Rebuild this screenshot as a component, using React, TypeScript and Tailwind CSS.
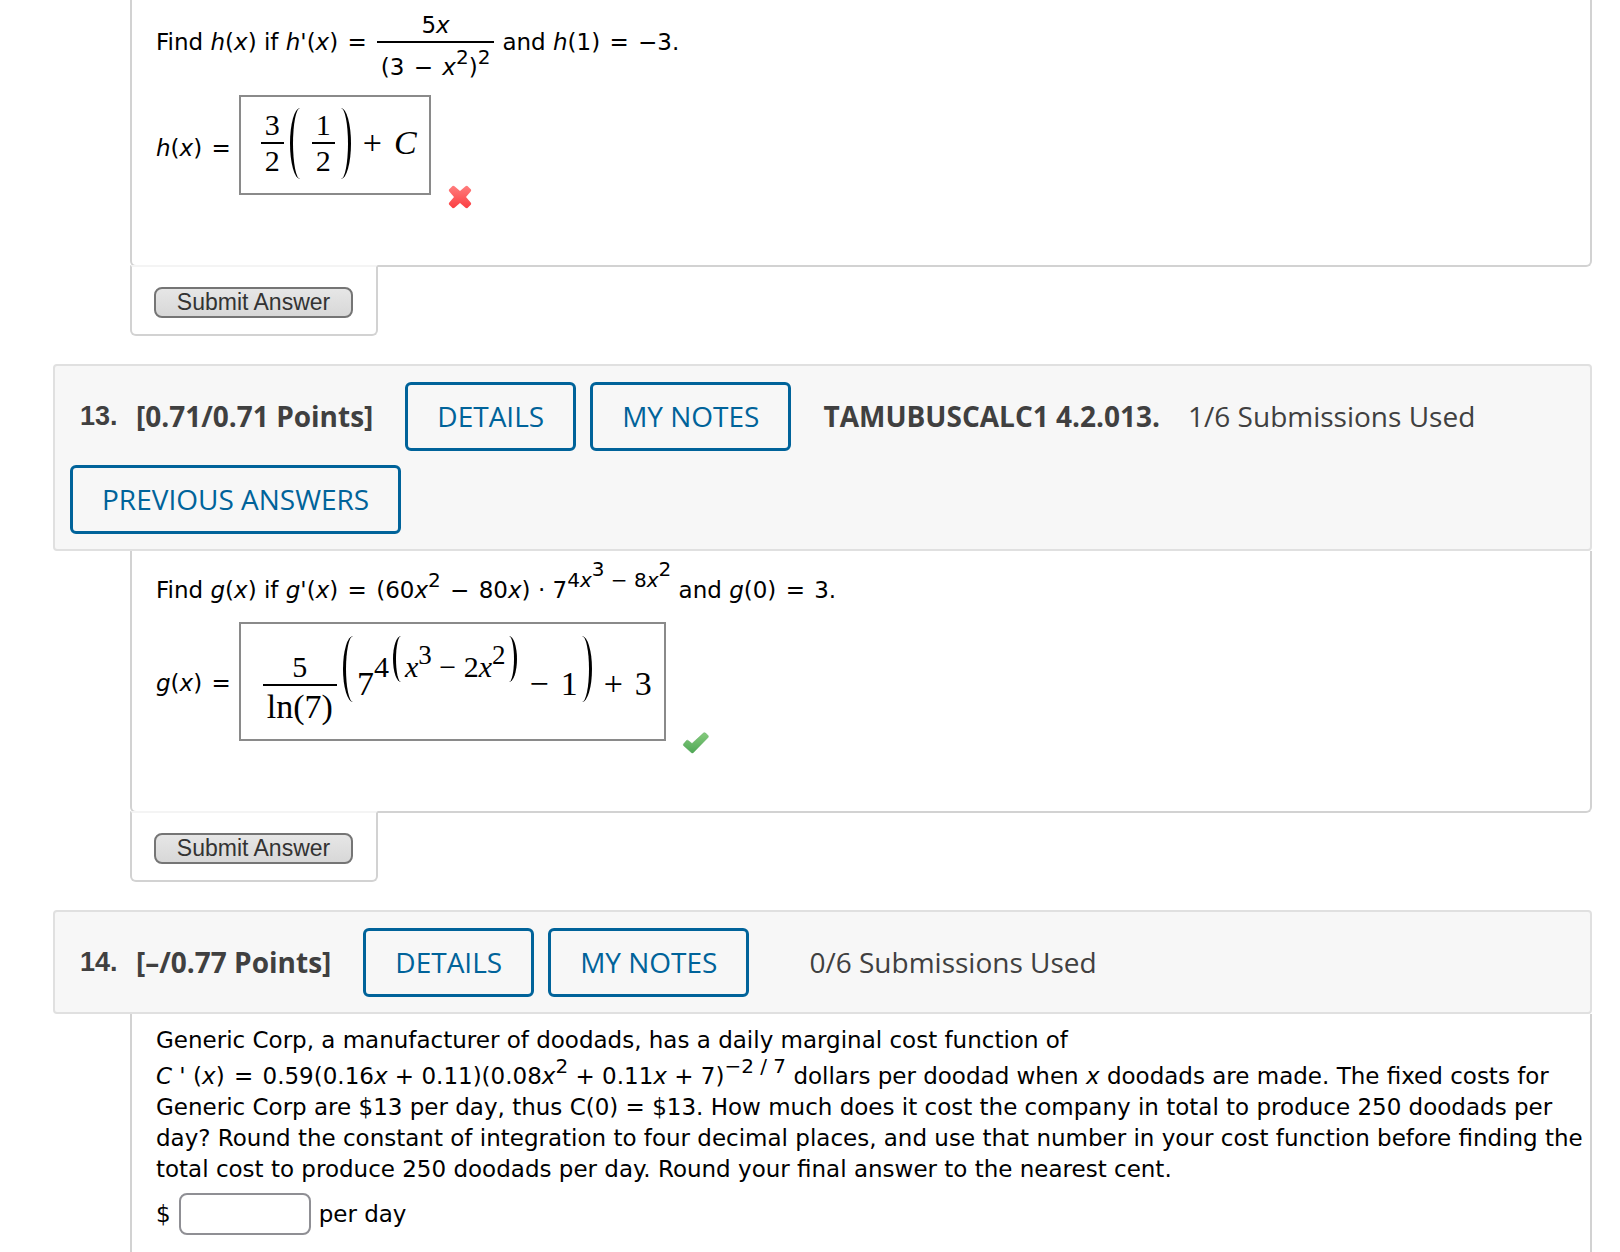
import type { ReactNode } from "react";

type ProblemHeaderProps = {
  number: string;
  points: string;
  source?: string;
  submissions: string;
  hasPrevious?: boolean;
};

function HeaderButton({ children }: { children: ReactNode }) {
  return (
    <button
      type="button"
      className="h-[69px] rounded-md border-3 border-[#00639a] px-[29px] pb-[2px] text-[28px] font-medium text-[#00639a]"
    >
      {children}
    </button>
  );
}

function ProblemHeader({ number, points, source, submissions, hasPrevious }: ProblemHeaderProps) {
  return (
    <header className="rounded-sm border-2 border-[#e0e0e0] bg-[#f7f7f7] px-[15px] pt-4 pb-[15px] font-['Open_Sans',sans-serif] text-[28px] text-[#404040]">
      <div className="flex items-center">
        <span className="ml-[10px] w-14 font-['Liberation_Sans',sans-serif] text-[27px] font-bold">{number}</span>
        <h2 className="pb-[2px] font-bold">{points}</h2>
        <div className="ml-8 flex gap-[14px]">
          <HeaderButton>DETAILS</HeaderButton>
          <HeaderButton>MY NOTES</HeaderButton>
        </div>
        {source && <strong className="ml-8 pb-[2px] font-bold">{source}</strong>}
        <span className={source ? "ml-7 pb-[2px]" : "ml-[60px] pb-[2px]"}>{submissions}</span>
      </div>
      {hasPrevious && (
        <div className="mt-[14px]">
          <HeaderButton>PREVIOUS ANSWERS</HeaderButton>
        </div>
      )}
    </header>
  );
}

function ProblemBody({ children }: { children: ReactNode }) {
  return (
    <div className="ml-[77px] rounded-b-md border-x-2 border-b-2 border-[#d2d2d2] pl-6 text-[23px] leading-[31px] text-black">
      {children}
    </div>
  );
}

function SubmitTab() {
  return (
    <div className="-mt-[2px] mb-7 ml-[77px] h-[71px] w-[248px] rounded-b-md border-2 border-t-[#f4f4f4] border-[#d2d2d2] bg-white px-[22px] pt-5">
      <button
        type="submit"
        className="h-[31px] w-[199px] rounded-lg border-2 border-[#757575] bg-linear-to-b from-[#e6e6e6] to-[#d8d8d8] font-['Liberation_Sans',sans-serif] text-[23px] leading-[27px] text-[#333333]"
      >
        Submit Answer
      </button>
    </div>
  );
}

function Sup({ children }: { children: ReactNode }) {
  return <sup className="static align-[11px] text-[20px] leading-none">{children}</sup>;
}

function Op({ children }: { children: ReactNode }) {
  return <span className="mx-[2px]">{children}</span>;
}

function Fraction({ top, bottom, large }: { top: string; bottom: string; large?: boolean }) {
  return (
    <span className="flex flex-col items-center text-[30px] leading-[34px]">
      <span>{top}</span>
      <span
        className={`self-stretch border-t-2 border-black px-1 text-center ${large ? "text-[34px] leading-[42px]" : ""}`}
      >
        {bottom}
      </span>
    </span>
  );
}

// one-sided border with a full radius tapers at both ends like a tall delimiter
function OpenParen({ className }: { className: string }) {
  return <span aria-label="(" className={`rounded-l-[100%_50%] border-l-3 border-black ${className}`} />;
}

function CloseParen({ className }: { className: string }) {
  return <span aria-label=")" className={`rounded-r-[100%_50%] border-r-3 border-black ${className}`} />;
}

function WrongIcon() {
  return (
    <svg width="26" height="26" viewBox="0 0 26 26" role="img" aria-label="Incorrect">
      <defs>
        <linearGradient id="wrong" x1="0" y1="0" x2="0" y2="1">
          <stop offset="0" stopColor="#ff7d7d" />
          <stop offset="1" stopColor="#fb3f42" />
        </linearGradient>
      </defs>
      <path
        d="M2 5.5 L5.5 2 Q6.5 1.5 7.5 2.3 L13 7 L18.5 2.3 Q19.5 1.5 20.5 2 L24 5.5 Q24.5 6.5 23.7 7.5 L19 13 L23.7 18.5 Q24.5 19.5 24 20.5 L20.5 24 Q19.5 24.5 18.5 23.7 L13 19 L7.5 23.7 Q6.5 24.5 5.5 24 L2 20.5 Q1.5 19.5 2.3 18.5 L7 13 L2.3 7.5 Q1.5 6.5 2 5.5 Z"
        fill="url(#wrong)"
      />
    </svg>
  );
}

function RightIcon() {
  return (
    <svg width="28" height="24" viewBox="0 0 28 24" role="img" aria-label="Correct">
      <defs>
        <linearGradient id="right" x1="0" y1="0" x2="0" y2="1">
          <stop offset="0" stopColor="#86cb7d" />
          <stop offset="1" stopColor="#4fa856" />
        </linearGradient>
      </defs>
      <path
        d="M1.5 13 L4.5 9.5 Q5.5 8.8 6.5 9.7 L10 12.5 L21.5 2 Q22.5 1.3 23.5 2 L26 4.5 Q26.8 5.5 26 6.5 L11.5 21.5 Q10.3 22.5 9.2 21.5 L1.7 14.8 Q1 14 1.5 13 Z"
        fill="url(#right)"
        stroke="#4c9d50"
        strokeOpacity="0.4"
      />
    </svg>
  );
}

function MathBox({ className, children }: { className: string; children: ReactNode }) {
  return (
    <div
      role="math"
      className={`flex border-2 border-[#8a8a8a] font-['Liberation_Serif',serif] text-[34px] leading-[38px] ${className}`}
    >
      {children}
    </div>
  );
}

export default function App() {
  return (
    <main className="min-h-screen overflow-x-hidden bg-white pr-7 pl-[53px] font-['DejaVu_Sans',Verdana,sans-serif]">
      <section>
        <ProblemBody>
          <div className="flex items-center pt-[10px]">
            <span className="pb-2">
              Find <i>h</i>(<i>x</i>) if <i>h'</i>(<i>x</i>) <Op>=</Op>
            </span>
            <span className="mx-2 flex flex-col text-center">
              <span>
                5<i>x</i>
              </span>
              <span className="border-t-2 border-black px-1 pt-1">
                (3 <Op>−</Op> <i>x</i>
                <Sup>2</Sup>)<Sup>2</Sup>
              </span>
            </span>
            <span className="pb-2">
              and <i>h</i>(1) <Op>=</Op> −3.
            </span>
          </div>
          <div className="flex items-start pt-3 pb-[55px]">
            <span className="mr-[6px] pt-[38px]">
              <i>h</i>(<i>x</i>) <Op>=</Op>
            </span>
            <MathBox className="h-[100px] items-center pr-3 pb-1 pl-5">
              <Fraction top="3" bottom="2" />
              <OpenParen className="ml-[6px] h-[71px] w-[10px]" />
              <span className="mr-[6px] ml-3">
                <Fraction top="1" bottom="2" />
              </span>
              <CloseParen className="mr-3 h-[71px] w-[10px]" />
              <span>+</span>
              <i className="ml-3">C</i>
            </MathBox>
            <span className="mt-[89px] ml-4">
              <WrongIcon />
            </span>
          </div>
        </ProblemBody>
        <SubmitTab />
      </section>

      <section>
        <ProblemHeader
          number="13."
          points="[0.71/0.71 Points]"
          source="TAMUBUSCALC1 4.2.013."
          submissions="1/6 Submissions Used"
          hasPrevious
        />
        <ProblemBody>
          <p className="pt-2">
            Find <i>g</i>(<i>x</i>) if <i>g'</i>(<i>x</i>) <Op>=</Op> (60<i>x</i>
            <Sup>2</Sup> <Op>−</Op> 80<i>x</i>) · 7
            <Sup>
              4<i>x</i>
              <Sup>3</Sup> − 8<i>x</i>
              <Sup>2</Sup>
            </Sup>{" "}
            and <i>g</i>(0) <Op>=</Op> 3.
          </p>
          <div className="flex items-start pt-4 pb-14">
            <span className="mr-[6px] pt-[46px]">
              <i>g</i>(<i>x</i>) <Op>=</Op>
            </span>
            <MathBox className="h-[119px] items-start pt-3 pr-3 pl-[22px]">
              <span className="mt-[14px]">
                <Fraction top="5" bottom="ln(7)" large />
              </span>
              <OpenParen className="ml-[6px] h-[66px] w-[10px]" />
              <span className="mt-[29px] ml-1">7</span>
              <span className="flex items-start text-[30px]">
                <span className="mt-3">4</span>
                <OpenParen className="ml-1 h-[46px] w-2" />
                <span className="mt-3 mr-1 ml-1">
                  <i>x</i>
                  <sup className="static align-[13px] text-[27px] leading-0">3</sup> − 2<i>x</i>
                  <sup className="static align-[13px] text-[27px] leading-0">2</sup>
                </span>
                <CloseParen className="h-[46px] w-2" />
              </span>
              <span className="mt-[29px] ml-3 flex gap-3">
                <span>−</span>
                <span>1</span>
              </span>
              <CloseParen className="ml-1 h-[66px] w-[10px]" />
              <span className="mt-[29px] ml-3 flex gap-3">
                <span>+</span>
                <span>3</span>
              </span>
            </MathBox>
            <span className="mt-[109px] ml-4">
              <RightIcon />
            </span>
          </div>
        </ProblemBody>
        <SubmitTab />
      </section>

      <section>
        <ProblemHeader number="14." points="[–/0.77 Points]" submissions="0/6 Submissions Used" />
        <ProblemBody>
          <p className="pt-[11px]">
            Generic Corp, a manufacturer of doodads, has a daily marginal cost function of
            <br />
            <i>C '</i> (<i>x</i>) <Op>=</Op> 0.59(0.16<i>x</i> + 0.11)(0.08<i>x</i>
            <Sup>2</Sup> + 0.11<i>x</i> + 7)
            <Sup>−2 / 7</Sup> dollars per doodad when <i>x</i> doodads are made. The fixed costs for
            Generic Corp are $13 per day, thus C(0) = $13. How much does it cost the company in total to
            produce 250 doodads per day? Round the constant of integration to four decimal places, and
            use that number in your cost function before finding the total cost to produce 250 doodads
            per day. Round your final answer to the nearest cent.
          </p>
          <div className="flex items-center gap-2 pt-2 pb-10">
            <label htmlFor="cost">$</label>
            <input
              id="cost"
              type="text"
              className="h-[42px] w-[132px] rounded-lg border-2 border-[#8f8f94] bg-white px-2"
            />
            <span>per day</span>
          </div>
        </ProblemBody>
      </section>
    </main>
  );
}
